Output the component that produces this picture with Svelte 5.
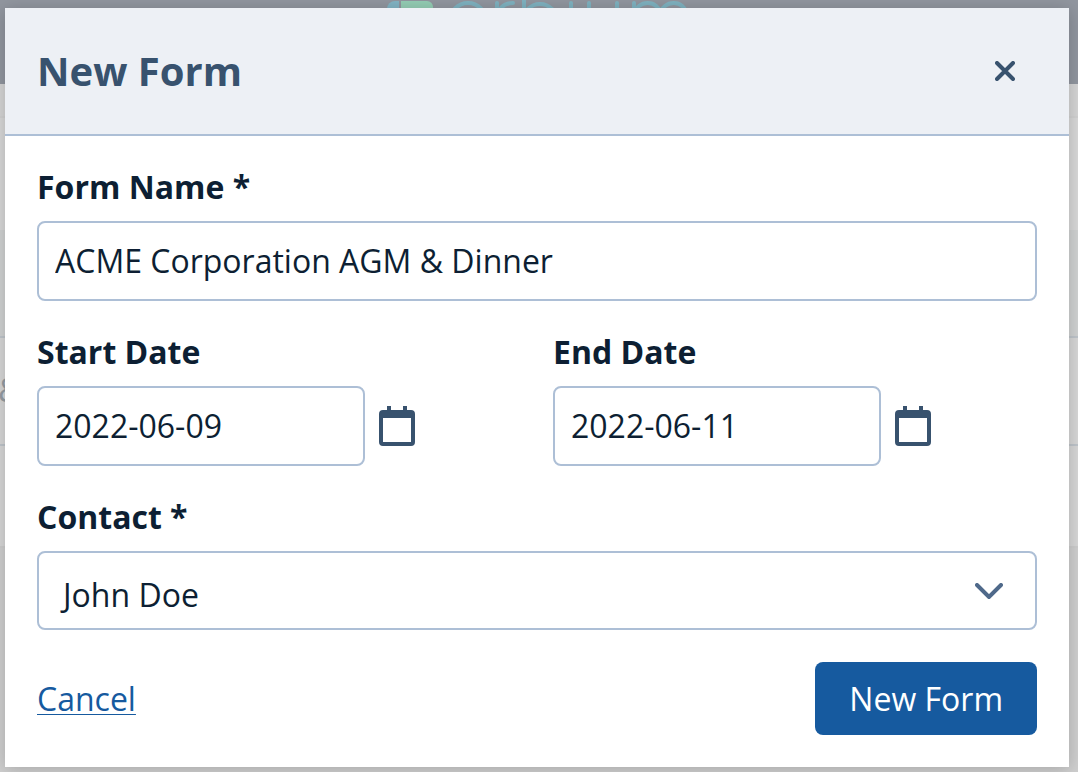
<script>
  let formName = $state('ACME Corporation AGM & Dinner');
  let startDate = $state('2022-06-09');
  let endDate = $state('2022-06-11');
  let contact = $state('John Doe');
</script>

{#snippet calendar()}
  <svg width="36" height="40" viewBox="0 0 36 40" aria-hidden="true">
    <path
      fill="currentColor"
      fill-rule="evenodd"
      d="M8 0h4v4h12V0h4v4h4a4 4 0 0 1 4 4v28a4 4 0 0 1-4 4H4a4 4 0 0 1-4-4V8a4 4 0 0 1 4-4h4zM4 12v24h28V12z"
    />
  </svg>
{/snippet}

<div class="screen">
  <div class="page" aria-hidden="true">
    <div class="banner">
      <svg width="304" height="84" viewBox="0 0 304 84">
        <path fill="#82b4c4" d="M8 1h4v50H0V9a8 8 0 0 1 8-8z" />
        <path fill="#94cdb4" d="M14 1h26a6 6 0 0 1 6 6v44H14z" />
        <g fill="none" stroke="#7fb2c0" stroke-width="4" stroke-linecap="round">
          <circle cx="81" cy="21" r="18" />
          <path d="M110 3v36M110 17C112 7 118 3 126 3" />
          <path d="M137-14v35" />
          <circle cx="153" cy="21" r="17" />
          <path d="M184 3v36" />
          <path d="M202 3v22c0 18 28 18 28 0V3" />
          <path d="M247 3v36M247 15c2-16 26-16 26 0v24M273 15c2-16 26-16 26 0v24" />
        </g>
      </svg>
    </div>
    <div class="toolbar"></div>
    <div class="intro"></div>
    <div class="heading"></div>
    <div class="entry">&amp;</div>
    <div class="summary"></div>
  </div>

  <div class="dialog" role="dialog" aria-labelledby="dialog-title">
    <header>
      <h1 id="dialog-title">New Form</h1>
      <button class="close" type="button" aria-label="Close">
        <svg width="20" height="20" viewBox="0 0 20 20" aria-hidden="true">
          <path d="M2 2l16 16M18 2L2 18" fill="none" stroke="currentColor" stroke-width="4" stroke-linecap="round" />
        </svg>
      </button>
    </header>

    <form onsubmit={(e) => e.preventDefault()}>
      <div class="field">
        <label for="form-name">Form Name *</label>
        <input id="form-name" type="text" bind:value={formName} />
      </div>

      <div class="dates">
        <div class="field">
          <label for="start-date">Start Date</label>
          <div class="date">
            <input id="start-date" type="text" bind:value={startDate} />
            <button type="button" aria-label="Choose start date">{@render calendar()}</button>
          </div>
        </div>
        <div class="field">
          <label for="end-date">End Date</label>
          <div class="date">
            <input id="end-date" type="text" bind:value={endDate} />
            <button type="button" aria-label="Choose end date">{@render calendar()}</button>
          </div>
        </div>
      </div>

      <div class="field">
        <label for="contact">Contact *</label>
        <div class="choice">
          <select id="contact" bind:value={contact}>
            <option>John Doe</option>
          </select>
          <svg width="28" height="16" viewBox="0 0 28 16" aria-hidden="true">
            <path d="M2 2l12 12L26 2" fill="none" stroke="currentColor" stroke-width="4" stroke-linecap="round" />
          </svg>
        </div>
      </div>

      <footer>
        <a href="#cancel">Cancel</a>
        <button class="submit" type="submit">New Form</button>
      </footer>
    </form>
  </div>
</div>

<style>
  :global(body) {
    margin: 0;
    background: #cfcfcf;
  }

  .screen {
    display: grid;
    min-height: 100vh;
    overflow: hidden;
    font-family: 'Open Sans', 'Noto Sans', sans-serif;
    font-size: 32px;
    color: #0d1f33;
  }

  .page,
  .dialog {
    grid-area: 1 / 1;
  }

  .page > div {
    box-sizing: border-box;
  }

  .banner {
    display: flex;
    justify-content: center;
    height: 84px;
    background: #91969f;
  }

  .toolbar {
    height: 34px;
    background: #d5d5d5;
    border-bottom: 2px solid #d1d1d1;
  }

  .intro {
    height: 112px;
    background: #d8d8d8;
  }

  .heading {
    height: 106px;
    background: #d0d2d2;
  }

  .entry {
    height: 110px;
    padding-top: 30px;
    background: #d7d7d7;
    border-top: 2px solid #bfc5cb;
    border-bottom: 2px solid #bfc5cb;
    color: #969da4;
    line-height: 44px;
    text-indent: -2px;
  }

  .summary {
    height: 102px;
    background: #d7d7d7;
    border-bottom: 2px solid #cdcdcd;
  }

  .dialog {
    z-index: 1;
    align-self: start;
    margin: 8px 9px 5px 5px;
    background: #fff;
    box-shadow: 0 2px 16px rgb(0 0 0 / 20%);
  }

  header {
    display: flex;
    align-items: center;
    justify-content: space-between;
    box-sizing: border-box;
    height: 128px;
    padding: 0 44px 0 32px;
    background: #edf0f5;
    border-bottom: 2px solid #adbfd6;
    color: #38526e;
  }

  h1 {
    margin: 0;
    font-size: 40px;
    line-height: 54px;
    font-weight: 700;
  }

  button {
    padding: 0;
    border: 0;
    background: none;
    color: #38526e;
    font: inherit;
    cursor: pointer;
  }

  button svg {
    display: block;
  }

  .close {
    padding: 10px;
  }

  form {
    display: grid;
    gap: 32px;
    padding: 32px;
  }

  .field {
    display: grid;
    gap: 15px;
    min-width: 0;
  }

  label {
    font-weight: 700;
    line-height: 38px;
  }

  input,
  select {
    box-sizing: border-box;
    width: 100%;
    height: 80px;
    margin: 0;
    padding: 0 16px 2px;
    border: 2px solid #adbfd6;
    border-radius: 8px;
    background: #fff;
    color: inherit;
    font: inherit;
  }

  .dates {
    display: grid;
    grid-template-columns: 1fr 1fr;
    gap: 32px;
  }

  .date {
    display: flex;
    align-items: center;
    gap: 14px;
  }

  .date input {
    width: 328px;
    min-width: 0;
  }

  .choice {
    display: grid;
    align-items: center;
    color: #4f698a;
  }

  .choice > * {
    grid-area: 1 / 1;
  }

  select {
    height: 79px;
    padding: 7px 60px 0 16px;
    appearance: none;
    color: #0d1f33;
    text-indent: 8px;
  }

  .choice svg {
    justify-self: end;
    margin-right: 34px;
    pointer-events: none;
  }

  footer {
    display: flex;
    align-items: center;
    justify-content: space-between;
  }

  a {
    color: #165a9f;
    text-decoration-thickness: 1px;
    text-underline-offset: 3px;
  }

  .submit {
    height: 73px;
    padding: 0 34px;
    border-radius: 8px;
    background: #165a9f;
    color: #fff;
  }
</style>
